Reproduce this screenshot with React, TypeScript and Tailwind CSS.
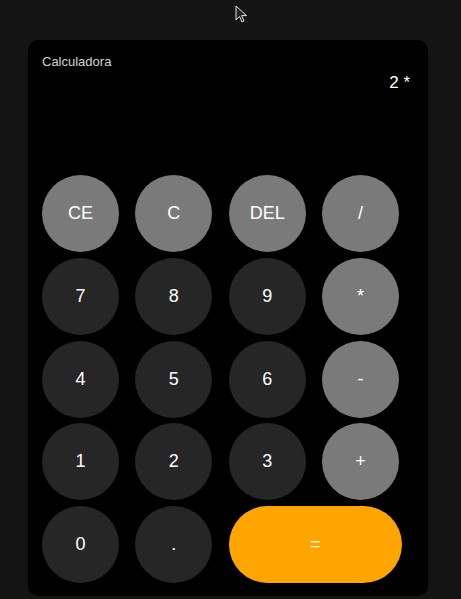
import { useState } from "react";

type Key = {
  label: string;
  kind: "fn" | "num" | "eq";
};

const keys: Key[] = [
  { label: "CE", kind: "fn" },
  { label: "C", kind: "fn" },
  { label: "DEL", kind: "fn" },
  { label: "/", kind: "fn" },
  { label: "7", kind: "num" },
  { label: "8", kind: "num" },
  { label: "9", kind: "num" },
  { label: "*", kind: "fn" },
  { label: "4", kind: "num" },
  { label: "5", kind: "num" },
  { label: "6", kind: "num" },
  { label: "-", kind: "fn" },
  { label: "1", kind: "num" },
  { label: "2", kind: "num" },
  { label: "3", kind: "num" },
  { label: "+", kind: "fn" },
  { label: "0", kind: "num" },
  { label: ".", kind: "num" },
  { label: "=", kind: "eq" },
];

function CalcButton({ item, onPress }: { item: Key; onPress: (k: string) => void }) {
  const base =
    "flex h-[77px] items-center justify-center rounded-full text-[18px] text-white";
  if (item.kind === "eq") {
    return (
      <button
        className={`${base} col-span-2 w-[173px] bg-[#ffa500]`}
        onClick={() => onPress(item.label)}
      >
        {item.label}
      </button>
    );
  }
  return (
    <button
      className={`${base} w-[77px] ${item.kind === "fn" ? "bg-[#7a7a7a]" : "bg-[#262626]"}`}
      onClick={() => onPress(item.label)}
    >
      {item.label}
    </button>
  );
}

function App() {
  const [display, setDisplay] = useState("2 *");

  function press(k: string) {
    if (k === "C" || k === "CE") setDisplay("");
    else if (k === "DEL") setDisplay((d) => d.slice(0, -1));
    else if (k === "=") {
      try {
        // eslint-disable-next-line no-new-func
        setDisplay(String(Function(`return (${display})`)()));
      } catch (error) {
        console.log(error);
      }
    } else if ("+-*/".includes(k)) setDisplay((d) => `${d} ${k}`);
    else setDisplay((d) => d + k);
  }

  return (
    <div className="relative h-[599px] w-full bg-[#141414] pt-[40px] pl-[28px] font-['Liberation_Sans',Arial,sans-serif]">
      <svg
        className="absolute left-[235px] top-[5px]"
        width="14"
        height="19"
        viewBox="0 0 14 19"
      >
        <path
          d="M1 1 L1 15 L4.5 11.5 L7 17 L9 16 L6.6 10.6 L11.5 10.6 Z"
          fill="#222"
          stroke="#e5e5e5"
          strokeWidth="1"
          strokeLinejoin="round"
        />
      </svg>
      <div className="flex h-[556px] w-[400px] flex-col rounded-[10px] bg-black px-[14px] pt-[14px]">
        <h1 className="text-[13px] leading-[15px] text-[#d4d4d4]">Calculadora</h1>
        <div className="mt-[4px] h-[102px] pr-[4px] text-right text-[17px] leading-[20px] text-white">
          {display}
        </div>
        <div className="grid grid-cols-[repeat(4,77px)] gap-x-[16.33px] gap-y-[5.75px]">
          {keys.map((item) => (
            <CalcButton key={item.label} item={item} onPress={press} />
          ))}
        </div>
      </div>
    </div>
  );
}

export default App;
